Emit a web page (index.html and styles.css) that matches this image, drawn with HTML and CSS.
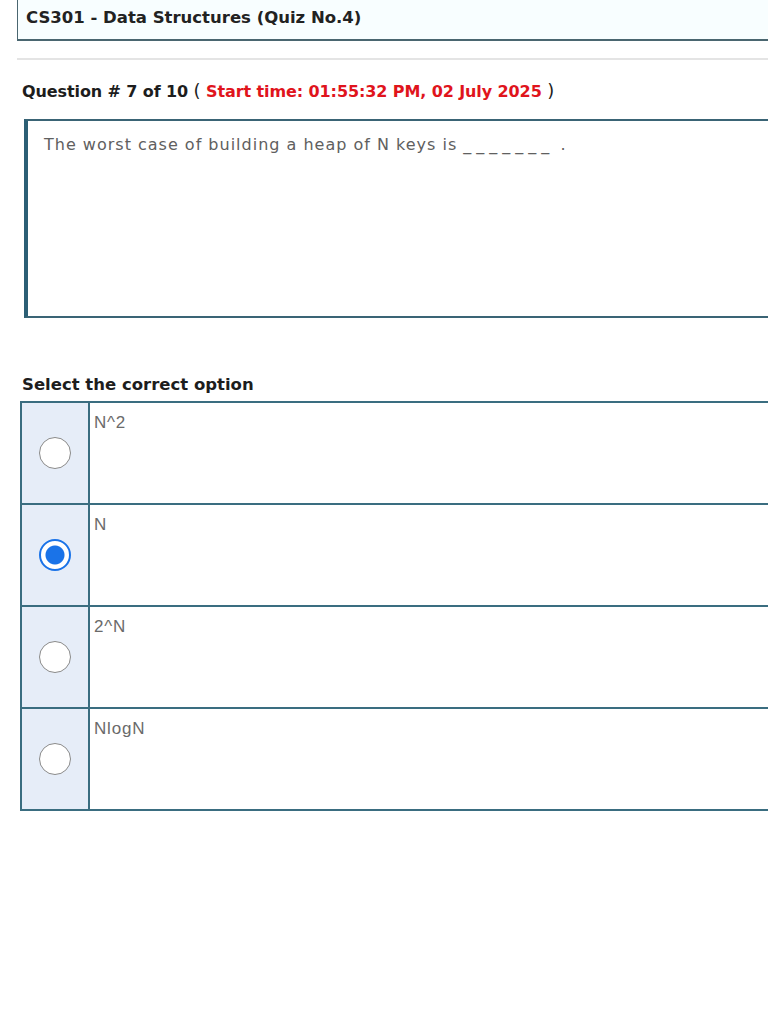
FILE: index.html
```html
<!DOCTYPE html>
<html>
<head>
<meta charset="utf-8">
<link rel="stylesheet" href="styles.css">
</head>
<body>
<div class="page">
  <div class="course">CS301 - Data Structures (Quiz No.4)</div>
  <div class="rule"></div>
  <div class="qhead">Question # 7 of 10 <span class="paren">(</span> <span class="start">Start time: 01:55:32 PM, 02 July 2025</span> <span class="paren">)</span></div>
  <div class="qbox">The worst case of building a heap of N keys is <span class="blank">_______</span> .</div>
  <div class="select">Select the correct option</div>
  <div class="options">
    <div class="opt">
      <div class="radio-cell"><span class="radio"></span></div>
      <div class="text-cell">N^2</div>
    </div>
    <div class="opt">
      <div class="radio-cell"><span class="radio checked"></span></div>
      <div class="text-cell">N</div>
    </div>
    <div class="opt">
      <div class="radio-cell"><span class="radio"></span></div>
      <div class="text-cell">2^N</div>
    </div>
    <div class="opt">
      <div class="radio-cell"><span class="radio"></span></div>
      <div class="text-cell">NlogN</div>
    </div>
  </div>
</div>
</body>
</html>
```
FILE: styles.css
```css
html, body {
  margin: 0;
  padding: 0;
  background: #ffffff;
}
.page {
  width: 768px;
  overflow: hidden;
  font-family: "DejaVu Sans", "Open Sans", sans-serif;
}
.course {
  margin-left: 17px;
  width: 800px;
  height: 41px;
  box-sizing: border-box;
  border-left: 1px solid #4a6670;
  border-bottom: 2px solid #4a6670;
  background: #f8feff;
  padding-left: 8px;
  font-weight: 700;
  font-size: 16.5px;
  line-height: 36px;
  color: #222;
  letter-spacing: 0;
}
.rule {
  margin: 17px 0 0 17px;
  height: 2px;
  background: #e4e4e4;
}
.qhead {
  margin: 20px 0 0 22px;
  font-weight: 700;
  font-size: 16px;
  line-height: 22px;
  color: #1d1d1d;
  letter-spacing: -0.1px;
}
.qhead .paren {
  font-weight: 400;
  font-size: 18px;
}
.qhead .start {
  color: #e0141c;
}
.qbox {
  margin: 16px 0 0 24px;
  width: 800px;
  height: 199px;
  box-sizing: border-box;
  border-top: 2px solid #3a6475;
  border-bottom: 2px solid #3a6475;
  border-left: 4px solid #2c5f75;
  padding: 13px 0 0 16px;
  font-size: 16px;
  line-height: 22px;
  color: #606060;
  letter-spacing: 1px;
}
.blank {
  letter-spacing: 5px;
}
.select {
  margin: 56px 0 0 22px;
  font-weight: 700;
  font-size: 16.5px;
  line-height: 22px;
  color: #1d1d1d;
  letter-spacing: 0;
}
.options {
  margin: 5px 0 0 20px;
  width: 800px;
  border-top: 2px solid #3a6d80;
  border-left: 2px solid #3a6d80;
}
.opt {
  display: flex;
  height: 102px;
  box-sizing: border-box;
  border-bottom: 2px solid #3a6d80;
}
.radio-cell {
  width: 66px;
  flex: none;
  background: #e6edf8;
  border-right: 2px solid #3a6d80;
  display: flex;
  align-items: center;
  justify-content: center;
}
.radio {
  width: 32px;
  height: 32px;
  box-sizing: border-box;
  border: 1.5px solid #8a8a8a;
  border-radius: 50%;
  background: #ffffff;
  display: block;
}
.radio.checked {
  border: 2px solid #1a73e8;
  background: radial-gradient(circle, #1a73e8 0, #1a73e8 9px, #ffffff 10px);
}
.text-cell {
  padding: 9px 0 0 4px;
  font-family: "Liberation Sans", Arial, sans-serif;
  font-size: 17px;
  line-height: 22px;
  color: #6a6a6a;
  letter-spacing: 0.8px;
}
```
